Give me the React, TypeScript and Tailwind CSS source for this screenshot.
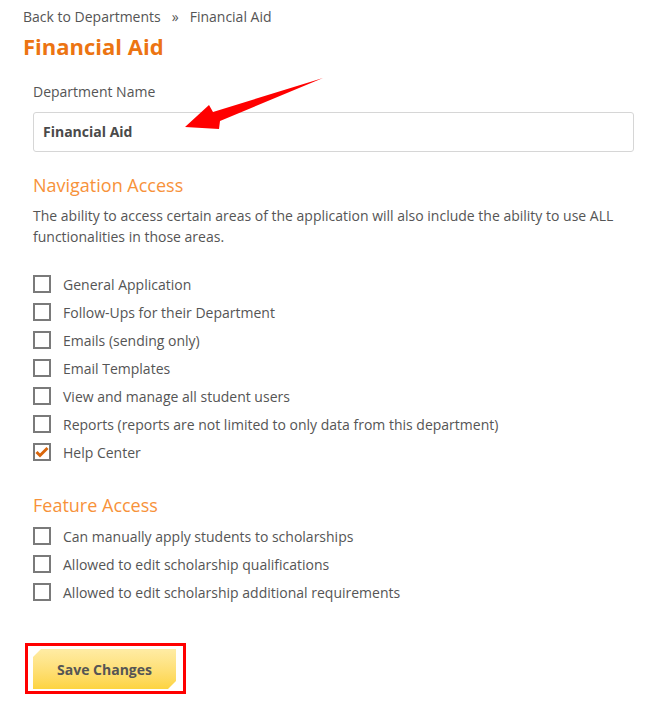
const navItems = [
  { label: 'General Application', checked: false },
  { label: 'Follow-Ups for their Department', checked: false },
  { label: 'Emails (sending only)', checked: false },
  { label: 'Email Templates', checked: false },
  { label: 'View and manage all student users', checked: false },
  { label: 'Reports (reports are not limited to only data from this department)', checked: false },
  { label: 'Help Center', checked: true },
]

const featureItems = [
  { label: 'Can manually apply students to scholarships', checked: false },
  { label: 'Allowed to edit scholarship qualifications', checked: false },
  { label: 'Allowed to edit scholarship additional requirements', checked: false },
]

function CheckRow({ label, checked }: { label: string; checked: boolean }) {
  return (
    <label className="flex h-[28px] items-center">
      <span className="flex h-[18px] w-[18px] items-center justify-center border-2 border-[#7a7a7a] bg-white">
        {checked && (
          <svg width="14" height="12" viewBox="0 0 14 12">
            <path d="M1.5 6 L5 9.5 L12.5 2" fill="none" stroke="#d9660c" strokeWidth="3" />
          </svg>
        )}
      </span>
      <span className="ml-[12px] text-[14px] text-[#555]">{label}</span>
    </label>
  )
}

export default function App() {
  return (
    <div className="relative min-h-[713px] bg-white pl-[23px] pr-[12px] pt-[7px] font-['Open_Sans',sans-serif] text-[#555]">
      {/* Breadcrumb */}
      <div className="text-[14px] leading-[20px]">
        <span>Back to Departments</span>
        <span className="mx-[11px]">»</span>
        <span>Financial Aid</span>
      </div>
      <h1 className="mt-[4px] text-[22px] font-bold leading-[30px] text-[#ec7412]">Financial Aid</h1>

      <div className="pl-[10px]">
        <div className="mt-[21px] text-[14px] leading-[20px]">Department Name</div>
        <div className="mt-[10px] flex h-[40px] items-center rounded-[3px] border border-[#d6d6d6] px-[9px] pb-[1px] text-[14px] font-bold text-[#4a4a4a]">
          Financial Aid
        </div>

        <h2 className="mt-[20px] text-[18px] leading-[26px] text-[#f7923a]">Navigation Access</h2>
        <p className="mt-[7px] text-[14px] leading-[21px]">
          The ability to access certain areas of the application will also include the ability to use ALL functionalities in those areas.
        </p>

        <div className="mt-[23px]">
          {navItems.map((item) => (
            <CheckRow key={item.label} {...item} />
          ))}
        </div>

        <h2 className="mt-[26px] text-[18px] leading-[26px] text-[#f7923a]">Feature Access</h2>
        <div className="mt-[4px]">
          {featureItems.map((item) => (
            <CheckRow key={item.label} {...item} />
          ))}
        </div>
      </div>

      {/* Save button with highlight box */}
      <div className="ml-[2px] mt-[37px] inline-block border-[3px] border-[#ff0000] pb-[2px] pl-[5px] pr-[7px] pt-[3px]">
        <button className="flex h-[40px] w-[143px] items-center justify-center bg-gradient-to-b from-[#ffeca4] to-[#fdd43e] text-[14px] font-bold text-[#555] [clip-path:polygon(8px_0,100%_0,100%_calc(100%-8px),calc(100%-8px)_100%,0_100%,0_8px)]">
          Save Changes
        </button>
      </div>

      {/* Annotation arrow */}
      <svg className="pointer-events-none absolute left-0 top-0" width="646" height="713">
        <polygon points="185,127 209,105 213,112 323,78 220,121 219,129" fill="#ff0000" />
      </svg>
    </div>
  )
}
